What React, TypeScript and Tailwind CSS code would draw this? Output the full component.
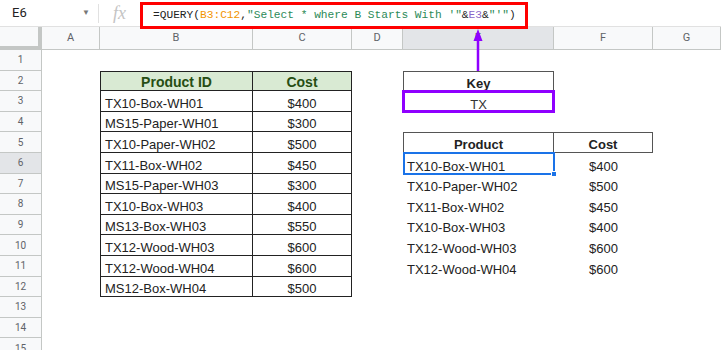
import React from "react";

type Cell = {
  text?: string;
  cls?: string;
};

const COLS = [
  { key: "A", w: "w-[58px]" },
  { key: "B", w: "w-[153px]" },
  { key: "C", w: "w-[99px]" },
  { key: "D", w: "w-[51px]" },
  { key: "E", w: "w-[151px]" },
  { key: "F", w: "w-[99px]" },
  { key: "G", w: "w-[68px]" },
];

const products: [string, string][] = [
  ["TX10-Box-WH01", "$400"],
  ["MS15-Paper-WH01", "$300"],
  ["TX10-Paper-WH02", "$500"],
  ["TX11-Box-WH02", "$450"],
  ["MS15-Paper-WH03", "$300"],
  ["TX10-Box-WH03", "$400"],
  ["MS13-Box-WH03", "$550"],
  ["TX12-Wood-WH03", "$600"],
  ["TX12-Wood-WH04", "$600"],
  ["MS12-Box-WH04", "$500"],
];

const results: [string, string][] = [
  ["TX10-Box-WH01", "$400"],
  ["TX10-Paper-WH02", "$500"],
  ["TX11-Box-WH02", "$450"],
  ["TX10-Box-WH03", "$400"],
  ["TX12-Wood-WH03", "$600"],
  ["TX12-Wood-WH04", "$600"],
];

const LEFT = "justify-start pl-[4px]";
const CENTER = "justify-center";

function buildRow(row: number): Cell[] {
  const cells: Cell[] = COLS.map(() => ({}));

  // source table B2:C12
  if (row === 2) {
    cells[1] = {
      text: "Product ID",
      cls: `${CENTER} border border-[#222] bg-[#d9ead3] text-[14px] font-bold text-[#274e13]`,
    };
    cells[2] = {
      text: "Cost",
      cls: `${CENTER} border-y border-r border-[#222] bg-[#d9ead3] text-[14px] font-bold text-[#274e13]`,
    };
  } else if (row >= 3 && row <= 12) {
    const [id, cost] = products[row - 3];
    cells[1] = { text: id, cls: `${LEFT} border-x border-b border-[#222]` };
    cells[2] = { text: cost, cls: `${CENTER} border-r border-b border-[#222]` };
  }

  // lookup key E2:E3
  if (row === 2) {
    cells[4] = { text: "Key", cls: `${CENTER} border-x border-t border-[#555] font-bold` };
  } else if (row === 3) {
    cells[4] = { text: "TX", cls: `${CENTER} text-[#333]` };
  }

  // query output E5:F11
  if (row === 5) {
    cells[4] = { text: "Product", cls: `${CENTER} border border-[#555] font-bold` };
    cells[5] = { text: "Cost", cls: `${CENTER} border-y border-r border-[#555] font-bold` };
  } else if (row >= 6 && row <= 11) {
    const [id, cost] = results[row - 6];
    cells[4] = { text: id, cls: LEFT };
    cells[5] = { text: cost, cls: CENTER };
  }

  return cells;
}

function FormulaBar() {
  return (
    <div className="flex h-[27px] items-start border-b border-[#e1e1e1] bg-white">
      <div className="flex h-[26px] w-[98px] items-center justify-between pl-[12px] pr-[8px]">
        <span className="font-['Roboto',sans-serif] text-[13px] text-[#222]">E6</span>
        <span className="text-[8px] text-[#777]">▼</span>
      </div>
      <div className="mt-[4px] h-[19px] w-px bg-[#e1e1e1]" />
      <div className="flex h-[26px] w-[41px] items-center pl-[14px]">
        <span className="font-['Liberation_Serif',serif] text-[18px] italic leading-none text-[#c4c4c4]">
          fx
        </span>
      </div>
      <div className="relative z-10 mt-[2px] flex h-[27px] w-[388px] items-center border-[3px] border-[#ff0000] bg-white pl-[10px] font-['Liberation_Mono',monospace] text-[11.2px] whitespace-pre text-[#222]">
        <span>=QUERY(</span>
        <span className="text-[#f29500]">B3:C12</span>
        <span>,</span>
        <span className="text-[#2b8a57]">"Select * where B Starts With '"</span>
        <span>&amp;</span>
        <span className="text-[#8a66c9]">E3</span>
        <span>&amp;</span>
        <span className="text-[#2b8a57]">"'"</span>
        <span>)</span>
      </div>
    </div>
  );
}

function ColumnHeaders() {
  return (
    <div className="flex h-[23px] bg-[#f8f9fa] font-['Roboto',sans-serif] text-[11px] text-[#5f6368]">
      <div className="w-[42px] shrink-0 border-r-[4px] border-b-[4px] border-[#c4c7c5]" />
      {COLS.map((c) => (
        <div
          key={c.key}
          className={`${c.w} flex shrink-0 items-center justify-center border-r border-b border-[#c4c7c5] ${
            c.key === "E" ? "bg-[#e3e5e8]" : ""
          }`}
        >
          {c.key}
        </div>
      ))}
    </div>
  );
}

function Row({ row }: { row: number }) {
  const cells = buildRow(row);
  return (
    <div className="flex h-[20.6px]">
      <div
        className={`flex w-[42px] shrink-0 items-center justify-center border-r border-b border-[#c4c7c5] font-['Roboto',sans-serif] text-[10px] text-[#5f6368] ${
          row === 6 ? "bg-[#e3e5e8]" : "bg-[#f8f9fa]"
        }`}
      >
        {row}
      </div>
      {COLS.map((c, i) => {
        const cell = cells[i];
        return (
          <div
            key={c.key}
            className={`${c.w} relative flex shrink-0 items-end overflow-visible leading-[15px] whitespace-nowrap text-[13px] text-[#222] ${
              cell.cls ?? ""
            }`}
          >
            {cell.text}
            {row === 3 && c.key === "E" && (
              <div className="pointer-events-none absolute -top-[1px] -right-[1px] -bottom-[1px] -left-[1px] border-[3px] border-[#8f00ff]" />
            )}
            {row === 6 && c.key === "E" && (
              <div className="pointer-events-none absolute -top-[1px] -right-[1px] -bottom-[1px] left-0 z-10 border-2 border-[#1a73e8]">
                <div className="absolute -right-[4px] -bottom-[4px] h-[6px] w-[6px] border border-white bg-[#1a73e8]" />
              </div>
            )}
          </div>
        );
      })}
    </div>
  );
}

export default function App() {
  const rows = Array.from({ length: 15 }, (_, i) => i + 1);
  return (
    <div className="relative h-[350px] w-[721px] overflow-hidden bg-white font-['Liberation_Sans',Arial,sans-serif]">
      <FormulaBar />
      <ColumnHeaders />
      {rows.map((r) => (
        <Row key={r} row={r} />
      ))}

      {/* arrow from the formula's E3 reference down to the key cell */}
      <svg
        className="absolute top-[28px] left-[470px] z-20"
        width="16"
        height="44"
        viewBox="0 0 16 44"
      >
        <line x1="8" y1="10" x2="8" y2="43" stroke="#8f00ff" strokeWidth="2.5" />
        <polygon points="8,1 3.5,13 12.5,13" fill="#8f00ff" />
      </svg>
    </div>
  );
}
